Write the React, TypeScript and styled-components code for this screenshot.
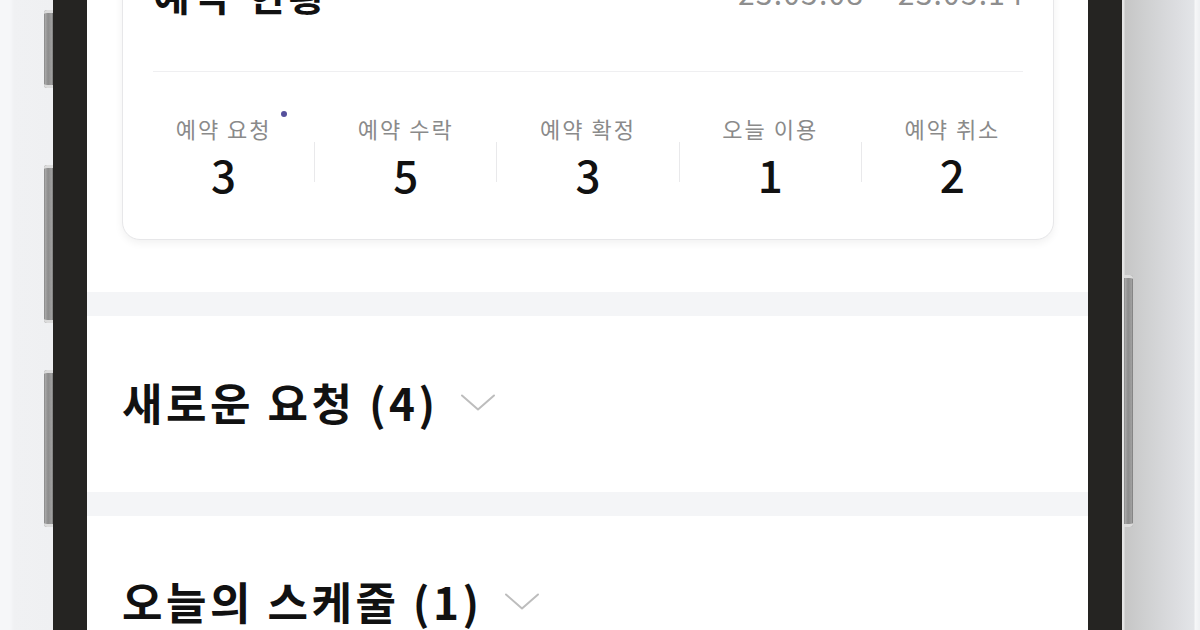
import React from 'react';
import styled, { createGlobalStyle } from 'styled-components';

const GlobalStyle = createGlobalStyle`
  html, body { margin: 0; padding: 0; }
  body {
    width: 1200px;
    height: 630px;
    overflow: hidden;
    background: #f2f3f5;
    font-family: "Noto Sans CJK KR", "Noto Sans", sans-serif;
  }
`;

const Stage = styled.div`
  display: flex;
  width: 1200px;
  height: 630px;
  overflow: hidden;
`;

const LeftGutter = styled.div`
  width: 53px;
  flex: none;
  display: flex;
  flex-direction: column;
  align-items: flex-end;
  background: linear-gradient(to right, #f6f7f9 0, #f6f7f9 10px, #f0f1f3 14px, #eff0f2 100%);
`;

const RightGutter = styled.div`
  flex: 1;
  display: flex;
  flex-direction: column;
  align-items: flex-start;
  background: linear-gradient(
    to right,
    #e4e4e4 0,
    #e4e4e4 2px,
    #c6c6c6 3px,
    #cfd0d1 30%,
    #dcdde0 70%,
    #e3e5e8 92%,
    #f6f7f8 94%,
    #eef0f2 100%
  );
`;

const SideButton = styled.div<{ $top: number; $height: number; $side: 'left' | 'right' }>`
  flex: none;
  width: 9px;
  height: ${(p) => p.$height}px;
  margin-top: ${(p) => p.$top}px;
  margin-left: ${(p) => (p.$side === 'right' ? 2 : 0)}px;
  border-radius: ${(p) => (p.$side === 'left' ? '3px 0 0 3px' : '0 3px 3px 0')};
  background: linear-gradient(to right, #b4b4b4, #8c8c8c 45%, #a6a6a6);
  box-shadow: inset 0 6px 0 -3px #dcdcdc, inset 0 -6px 0 -3px #dcdcdc, inset 0 0 0 1px rgba(0, 0, 0, 0.18);
`;

const Bezel = styled.div`
  width: 34px;
  flex: none;
  background: #252422;
`;

const Screen = styled.main`
  flex: none;
  width: 1001px;
  height: 630px;
  background: #ffffff;
  overflow: hidden;
  display: flex;
  flex-direction: column;
`;

const ScrollContent = styled.div<{ $offset: number }>`
  display: flex;
  flex-direction: column;
  margin-top: ${(p) => -p.$offset}px;
`;

const Card = styled.section`
  margin: 0 34px 52px 35px;
  padding: 36px 10px 41px;
  border: 1px solid #e7e7e9;
  border-radius: 18px;
  background: #fff;
  box-shadow: 0 3px 8px rgba(0, 0, 0, 0.06);
`;

const CardHeader = styled.div`
  display: flex;
  justify-content: space-between;
  align-items: flex-end;
  margin: 0 20px;
`;

const CardTitle = styled.h2`
  margin: 0;
  font-size: 40px;
  line-height: 48px;
  font-weight: 700;
  color: #111;
  letter-spacing: 4px;
`;

const DateRange = styled.span`
  font-size: 30px;
  line-height: 36px;
  color: #8e8e8e;
  letter-spacing: 1.2px;
  margin-right: -1px;
  padding-bottom: 8px;
`;

const HLine = styled.div`
  height: 1px;
  background: #efeff1;
  margin: 53px 20px 0;
`;

const StatsRow = styled.div`
  display: flex;
  padding-top: 41px;
`;

const Stat = styled.div`
  flex: 1;
  display: flex;
  flex-direction: column;
  align-items: center;
`;

const StatLabel = styled.span`
  position: relative;
  font-size: 22px;
  line-height: 30px;
  color: #8a8a8a;
  letter-spacing: 2px;
`;

const NewDot = styled.span`
  position: absolute;
  top: -2px;
  right: -15px;
  width: 6px;
  height: 6px;
  border-radius: 50%;
  background: #55509c;
`;

const StatValue = styled.span`
  margin-top: 7px;
  font-size: 44px;
  line-height: 48px;
  font-weight: 500;
  color: #111;
`;

const StatSep = styled.div`
  flex: none;
  width: 1px;
  height: 40px;
  margin-top: 29px;
  background: #e9e9eb;
`;

const Band = styled.div`
  height: 24px;
  flex: none;
  background: #f4f5f7;
`;

const Section = styled.section<{ $lift: number }>`
  height: 176px;
  flex: none;
  box-sizing: border-box;
  display: flex;
  align-items: center;
  gap: 22px;
  padding: 0 0 ${(p) => p.$lift}px 35px;
`;

const SectionTitle = styled.h3`
  margin: 0;
  font-size: 44px;
  line-height: 1.2;
  font-weight: 700;
  color: #111;
  letter-spacing: 3.5px;
`;

const Chevron = () => (
  <svg width="34" height="17" viewBox="0 0 34 17" fill="none">
    <path d="M1 1.5 L17 15.5 L33 1.5" stroke="#bdbdbd" strokeWidth="2" strokeLinecap="round" strokeLinejoin="round" />
  </svg>
);

const stats = [
  { label: '예약 요청', value: 3, dot: true },
  { label: '예약 수락', value: 5 },
  { label: '예약 확정', value: 3 },
  { label: '오늘 이용', value: 1 },
  { label: '예약 취소', value: 2 },
];

export default function App() {
  return (
    <>
      <GlobalStyle />
      <Stage>
        <LeftGutter>
          <SideButton $side="left" $top={10} $height={78} />
          <SideButton $side="left" $top={77} $height={158} />
          <SideButton $side="left" $top={47} $height={157} />
        </LeftGutter>
        <Bezel />
        <Screen>
          <ScrollContent $offset={67}>
            <Card>
              <CardHeader>
                <CardTitle>예약 현황</CardTitle>
                <DateRange>23.05.08 ~ 23.05.14</DateRange>
              </CardHeader>
              <HLine />
              <StatsRow>
                {stats.map((s, i) => (
                  <React.Fragment key={s.label}>
                    {i > 0 && <StatSep />}
                    <Stat>
                      <StatLabel>
                        {s.label}
                        {s.dot && <NewDot />}
                      </StatLabel>
                      <StatValue>{s.value}</StatValue>
                    </Stat>
                  </React.Fragment>
                ))}
              </StatsRow>
            </Card>
            <Band />
            <Section $lift={4}>
              <SectionTitle>새로운 요청 (4)</SectionTitle>
              <Chevron />
            </Section>
            <Band />
            <Section $lift={6}>
              <SectionTitle>오늘의 스케줄 (1)</SectionTitle>
              <Chevron />
            </Section>
          </ScrollContent>
        </Screen>
        <Bezel />
        <RightGutter>
          <SideButton $side="right" $top={275} $height={252} />
        </RightGutter>
      </Stage>
    </>
  );
}
